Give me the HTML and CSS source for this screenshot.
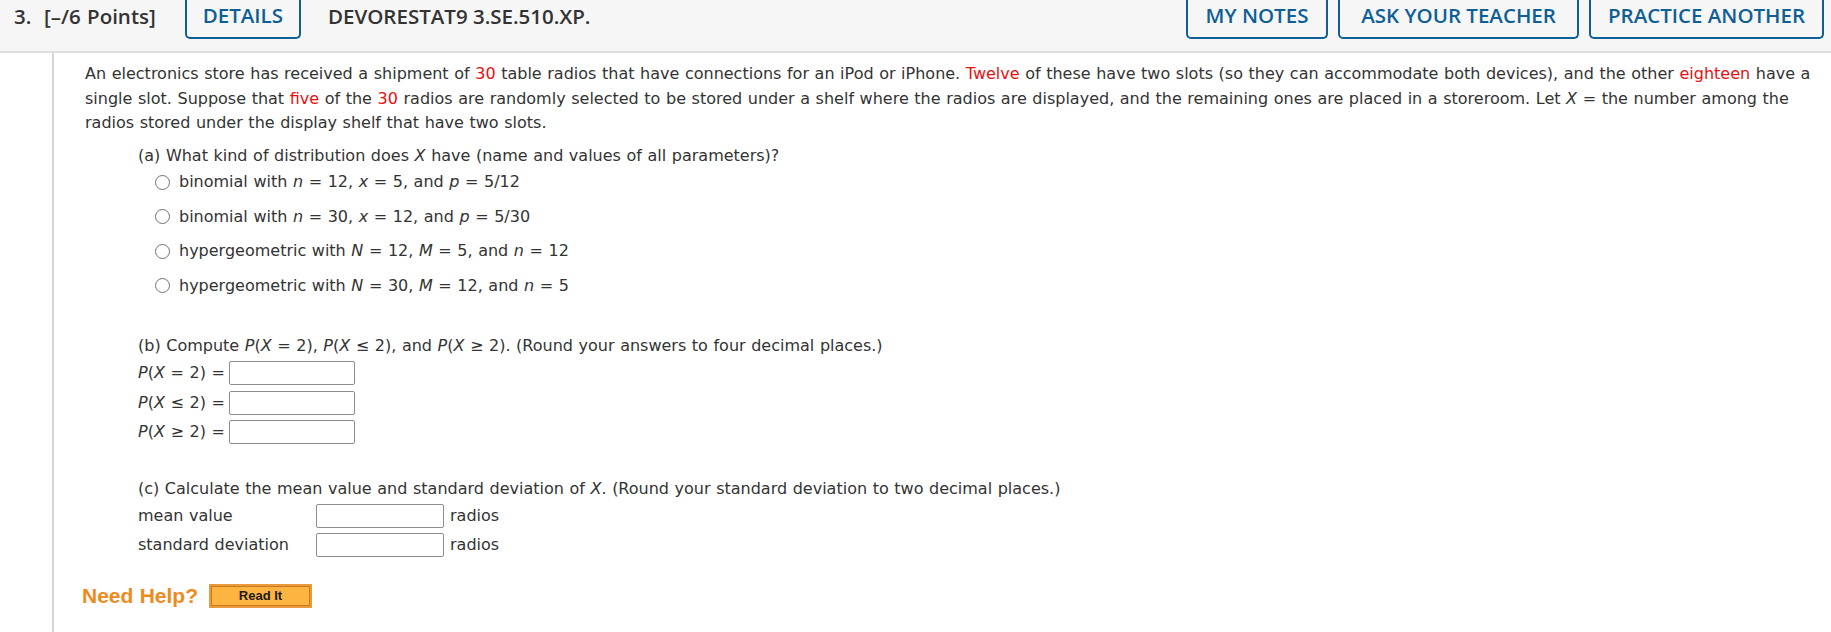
FILE: index.html
```html
<html>
<head>
  <title>DEVORESTAT9 3.SE.510.XP.</title>
  <link rel="stylesheet" href="styles.css">
</head>
<body>
  <header class="qbar">
    <span class="qnum">3.&nbsp; [–/6 Points]</span>
    <button class="tab tab-details">DETAILS</button>
    <span class="qcode">DEVORESTAT9 3.SE.510.XP.</span>
    <div class="tab-group">
      <button class="tab tab-notes">MY NOTES</button>
      <button class="tab tab-ask">ASK YOUR TEACHER</button>
      <button class="tab tab-practice">PRACTICE ANOTHER</button>
    </div>
  </header>

  <article class="question">
    <p class="stem">
      An electronics store has received a shipment of <span class="red">30</span> table radios that have connections for an iPod or iPhone. <span class="red">Twelve</span> of these have two slots (so they can accommodate both devices), and the other <span class="red">eighteen</span> have a single slot. Suppose that <span class="red">five</span> of the <span class="red">30</span> radios are randomly selected to be stored under a shelf where the radios are displayed, and the remaining ones are placed in a storeroom. Let <i>X</i> = the number among the radios stored under the display shelf that have two slots.
    </p>

    <section class="part part-a">
      <div class="prompt">(a) What kind of distribution does <i>X</i> have (name and values of all parameters)?</div>
      <ul class="choices">
        <li><span class="radio"></span><span>binomial with <i>n</i> = 12, <i>x</i> = 5, and <i>p</i> = 5/12</span></li>
        <li><span class="radio"></span><span>binomial with <i>n</i> = 30, <i>x</i> = 12, and <i>p</i> = 5/30</span></li>
        <li><span class="radio"></span><span>hypergeometric with <i>N</i> = 12, <i>M</i> = 5, and <i>n</i> = 12</span></li>
        <li><span class="radio"></span><span>hypergeometric with <i>N</i> = 30, <i>M</i> = 12, and <i>n</i> = 5</span></li>
      </ul>
    </section>

    <section class="part part-b">
      <div class="prompt">(b) Compute <i>P</i>(<i>X</i> = 2), <i>P</i>(<i>X</i> ≤ 2), and <i>P</i>(<i>X</i> ≥ 2). (Round your answers to four decimal places.)</div>
      <div class="prob-row"><span><i>P</i>(<i>X</i> = 2) =</span><input type="text" class="answer"></div>
      <div class="prob-row"><span><i>P</i>(<i>X</i> ≤ 2) =</span><input type="text" class="answer"></div>
      <div class="prob-row"><span><i>P</i>(<i>X</i> ≥ 2) =</span><input type="text" class="answer"></div>
    </section>

    <section class="part part-c">
      <div class="prompt">(c) Calculate the mean value and standard deviation of <i>X</i>. (Round your standard deviation to two decimal places.)</div>
      <div class="unit-row"><span>mean value</span><input type="text" class="answer"><span>radios</span></div>
      <div class="unit-row"><span>standard deviation</span><input type="text" class="answer"><span>radios</span></div>
    </section>

    <div class="help">
      <span class="help-label">Need Help?</span>
      <button class="read-it">Read It</button>
    </div>
  </article>
</body>
</html>
```

FILE: styles.css
```css
body {
  margin: 0;
  font-family: "DejaVu Sans", Verdana, sans-serif;
  color: #333;
  background: #fff;
}

/* question header bar */
.qbar {
  display: flex;
  align-items: flex-start;
  height: 51px;
  background-color: #f6f6f6;
  border-bottom: 2px solid #dedede;
  font-family: "Open Sans", sans-serif;
  font-weight: 600;
  font-size: 20.5px;
  color: #333;
  padding: 0 7px 0 14px;
}
.qnum,
.qcode {
  line-height: 32px;
}
.qnum {
  word-spacing: 1px;
}
.qcode {
  margin-left: 27px;
}
.tab {
  height: 39px;
  padding: 0 16px 7px;
  line-height: 32px;
  background: transparent;
  border: 2px solid #0e5f95;
  border-top: none;
  border-radius: 0 0 5px 5px;
  color: #0e5f95;
  font: inherit;
  cursor: pointer;
}
.tab-details {
  margin-left: 29px;
}
.tab-group {
  display: flex;
  gap: 10px;
  margin-left: auto;
}
.tab-group .tab {
  padding: 0 0 7px;
}
.tab-notes {
  width: 142px;
}
.tab-ask {
  width: 241px;
}
.tab-practice {
  width: 235px;
}

/* question body */
.question {
  box-sizing: border-box;
  min-height: calc(100vh - 53px);
  margin-left: 52px;
  border-left: 2px solid #d4d4d4;
  padding: 9px 8px 10px 31px;
  font-size: 16px;
  word-spacing: 0.5px;
  line-height: 24.5px;
}
.stem {
  margin: 0;
}
.red {
  color: #e81010;
}
i {
  font-style: italic;
}

.part {
  margin-left: 53px;
}
.part-a {
  margin-top: 8px;
}
.choices {
  list-style: none;
  margin: 2px 0 0;
  padding: 0 0 0 17px;
  display: flex;
  flex-direction: column;
  gap: 10px;
}
.choices li {
  display: flex;
  align-items: center;
}
.radio {
  flex: none;
  width: 13px;
  height: 13px;
  border: 1.5px solid #707070;
  border-radius: 50%;
  margin-right: 9px;
  background: #fff;
}

.part-b {
  margin-top: 36px;
}
.prob-row {
  display: flex;
  align-items: center;
  height: 29.5px;
}
.prob-row:first-of-type {
  margin-top: 2px;
}
.answer {
  box-sizing: border-box;
  width: 126px;
  height: 24px;
  border: 1px solid #8d8d8d;
  border-radius: 2px;
  margin-left: 4px;
  padding: 0 4px;
  font: inherit;
}

.part-c {
  margin-top: 30px;
}
.unit-row {
  display: grid;
  grid-template-columns: 178px 128px auto;
  align-items: center;
  height: 29px;
}
.unit-row:first-of-type {
  margin-top: 4px;
}
.unit-row .answer {
  width: 128px;
  margin-left: 0;
}
.unit-row span:last-child {
  margin-left: 6px;
}

.help {
  display: flex;
  align-items: center;
  gap: 11px;
  margin: 24px 0 0 -3px;
}
.help-label {
  font-family: "Liberation Sans", Arial, sans-serif;
  font-weight: bold;
  font-size: 21px;
  color: #ef8a1c;
}
.read-it {
  width: 103px;
  height: 24px;
  background-color: #fdb441;
  border: 2px solid #eb9a3a;
  box-shadow: inset 0 0 0 1px #c77a22;
  font-family: "Liberation Sans", Arial, sans-serif;
  font-weight: bold;
  font-size: 13px;
  color: #1b1b1b;
  padding: 0;
  cursor: pointer;
}
```
